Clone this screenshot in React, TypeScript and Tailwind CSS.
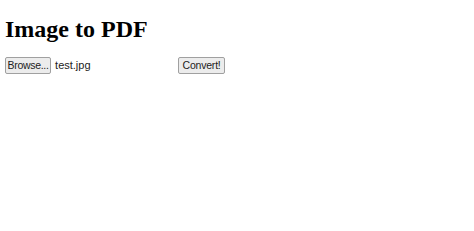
export default function App() {
  return (
    <div className="min-h-screen bg-white px-[5px] pt-[15px] text-black">
      <h1 className="font-['Liberation_Serif',serif] text-[24px] font-bold leading-[28px]">
        Image to PDF
      </h1>
      <form className="mt-[14px] flex items-center font-['Liberation_Sans',Arial,sans-serif] text-[10.5px]">
        <div className="flex w-[173px] items-center gap-[4px]">
          <button
            type="button"
            className="h-[17px] rounded-[2px] border border-[#a0a0a0] bg-[#ececec] px-[1.5px] leading-none tracking-[-0.3px] text-[#222]"
          >
            Browse...
          </button>
          <span className="text-[11px] text-[#222]">test.jpg</span>
        </div>
        <button
          type="button"
          className="h-[17px] rounded-[2px] border border-[#a0a0a0] bg-[#ececec] px-[3.5px] leading-none tracking-[-0.2px] text-[#222]"
        >
          Convert!
        </button>
      </form>
    </div>
  )
}
